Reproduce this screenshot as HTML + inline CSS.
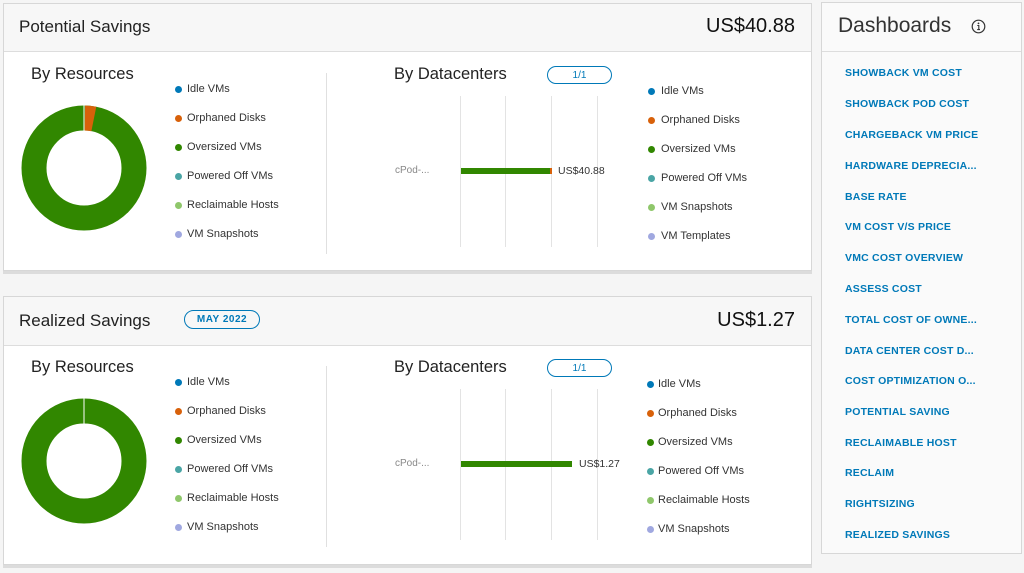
<!DOCTYPE html>
<html><head><meta charset="utf-8"><style>
*{margin:0;padding:0;box-sizing:border-box}
body{width:1024px;height:573px;background:#f5f5f5;font-family:"Liberation Sans",sans-serif;position:relative;overflow:hidden;color:#222}
.a{position:absolute;white-space:nowrap}
.card{position:absolute;left:3px;width:809px;background:#fff;border:1px solid #d7d7d7;box-shadow:0 3px 0 #dcdcdc}
.hdr{position:absolute;left:0;top:0;right:0;background:#f7f7f7;border-bottom:1px solid #ddd}
.leg{font-size:11px;color:#333}
.dot{position:absolute;width:7px;height:7px;border-radius:50%}
.pill{position:absolute;border:1px solid #0079b8;border-radius:10px;color:#0079b8;font-size:10px;display:flex;align-items:center;justify-content:center}
.side a{position:absolute;left:845px;font-size:10.5px;font-weight:bold;color:#0079b8;text-decoration:none;letter-spacing:.2px}
.grid{position:absolute;width:1px;background:#e3e3e3}
</style></head><body>

<div class="card" style="top:3px;height:268px">
 <div class="hdr" style="height:48px"></div>
</div>
<div class="a" style="left:19px;top:17px;font-size:17px;color:#222">Potential Savings</div>
<div class="a" style="right:229px;top:15px;font-size:20px;color:#111">US$40.88</div>
<div class="a" style="left:31px;top:65px;font-size:16.5px">By Resources</div>
<svg class="a" style="left:20px;top:104px" width="128" height="128" viewBox="0 0 128 128">
 <circle cx="64" cy="64" r="50" fill="none" stroke="#318700" stroke-width="25"/>
 <circle cx="64" cy="64" r="50" fill="none" stroke="#d8610a" stroke-width="25" stroke-dasharray="9 400" transform="rotate(-89 64 64)"/>
 <line x1="64" y1="1" x2="64" y2="27" stroke="#fff" stroke-width="1"/>
</svg>
<div class="a" style="left:326px;top:73px;width:1px;height:181px;background:#e0e0e0"></div>
<div class="a" style="left:394px;top:65px;font-size:16.5px">By Datacenters</div>
<div class="pill" style="left:547px;top:66px;width:65px;height:18px">1/1</div>
<div class="grid" style="left:460px;top:96px;height:151px"></div>
<div class="grid" style="left:505px;top:96px;height:151px"></div>
<div class="grid" style="left:551px;top:96px;height:151px"></div>
<div class="grid" style="left:597px;top:96px;height:151px"></div>
<div class="a" style="left:395px;top:165px;font-size:10px;color:#888">cPod-...</div>
<div class="a" style="left:461px;top:168px;width:89px;height:6px;background:#318700"></div>
<div class="a" style="left:550px;top:168px;width:2px;height:6px;background:#d8610a"></div>
<div class="a" style="left:558px;top:165px;font-size:10.5px;color:#333">US$40.88</div>

<div class="card" style="top:296px;height:269px">
 <div class="hdr" style="height:49px"></div>
</div>
<div class="a" style="left:19px;top:311px;font-size:17px">Realized Savings</div>
<div class="pill" style="left:184px;top:310px;width:76px;height:19px;font-weight:bold;letter-spacing:.5px">MAY 2022</div>
<div class="a" style="right:229px;top:309px;font-size:20px;color:#111">US$1.27</div>
<div class="a" style="left:31px;top:358px;font-size:16.5px">By Resources</div>
<svg class="a" style="left:20px;top:397px" width="128" height="128" viewBox="0 0 128 128">
 <circle cx="64" cy="64" r="50" fill="none" stroke="#318700" stroke-width="25"/>
 <line x1="64" y1="1" x2="64" y2="27" stroke="#fff" stroke-width="1"/>
</svg>
<div class="a" style="left:326px;top:366px;width:1px;height:181px;background:#e0e0e0"></div>
<div class="a" style="left:394px;top:358px;font-size:16.5px">By Datacenters</div>
<div class="pill" style="left:547px;top:359px;width:65px;height:18px">1/1</div>
<div class="grid" style="left:460px;top:389px;height:151px"></div>
<div class="grid" style="left:505px;top:389px;height:151px"></div>
<div class="grid" style="left:551px;top:389px;height:151px"></div>
<div class="grid" style="left:597px;top:389px;height:151px"></div>
<div class="a" style="left:395px;top:458px;font-size:10px;color:#888">cPod-...</div>
<div class="a" style="left:461px;top:461px;width:111px;height:6px;background:#318700"></div>
<div class="a" style="left:579px;top:458px;font-size:10.5px;color:#333">US$1.27</div>

<div class="dot" style="left:175px;top:86px;background:#0079b8"></div><div class="a leg" style="left:187px;top:83px">Idle VMs</div>
<div class="dot" style="left:175px;top:115px;background:#d8610a"></div><div class="a leg" style="left:187px;top:112px">Orphaned Disks</div>
<div class="dot" style="left:175px;top:144px;background:#318700"></div><div class="a leg" style="left:187px;top:141px">Oversized VMs</div>
<div class="dot" style="left:175px;top:173px;background:#4aa5a5"></div><div class="a leg" style="left:187px;top:170px">Powered Off VMs</div>
<div class="dot" style="left:175px;top:202px;background:#8fc76b"></div><div class="a leg" style="left:187px;top:199px">Reclaimable Hosts</div>
<div class="dot" style="left:175px;top:231px;background:#a0a8e0"></div><div class="a leg" style="left:187px;top:228px">VM Snapshots</div>

<div class="dot" style="left:648px;top:88px;background:#0079b8"></div><div class="a leg" style="left:661px;top:85px">Idle VMs</div>
<div class="dot" style="left:648px;top:117px;background:#d8610a"></div><div class="a leg" style="left:661px;top:114px">Orphaned Disks</div>
<div class="dot" style="left:648px;top:146px;background:#318700"></div><div class="a leg" style="left:661px;top:143px">Oversized VMs</div>
<div class="dot" style="left:648px;top:175px;background:#4aa5a5"></div><div class="a leg" style="left:661px;top:172px">Powered Off VMs</div>
<div class="dot" style="left:648px;top:204px;background:#8fc76b"></div><div class="a leg" style="left:661px;top:201px">VM Snapshots</div>
<div class="dot" style="left:648px;top:233px;background:#a0a8e0"></div><div class="a leg" style="left:661px;top:230px">VM Templates</div>

<div class="dot" style="left:175px;top:379px;background:#0079b8"></div><div class="a leg" style="left:187px;top:376px">Idle VMs</div>
<div class="dot" style="left:175px;top:408px;background:#d8610a"></div><div class="a leg" style="left:187px;top:405px">Orphaned Disks</div>
<div class="dot" style="left:175px;top:437px;background:#318700"></div><div class="a leg" style="left:187px;top:434px">Oversized VMs</div>
<div class="dot" style="left:175px;top:466px;background:#4aa5a5"></div><div class="a leg" style="left:187px;top:463px">Powered Off VMs</div>
<div class="dot" style="left:175px;top:495px;background:#8fc76b"></div><div class="a leg" style="left:187px;top:492px">Reclaimable Hosts</div>
<div class="dot" style="left:175px;top:524px;background:#a0a8e0"></div><div class="a leg" style="left:187px;top:521px">VM Snapshots</div>

<div class="dot" style="left:647px;top:381px;background:#0079b8"></div><div class="a leg" style="left:658px;top:378px">Idle VMs</div>
<div class="dot" style="left:647px;top:410px;background:#d8610a"></div><div class="a leg" style="left:658px;top:407px">Orphaned Disks</div>
<div class="dot" style="left:647px;top:439px;background:#318700"></div><div class="a leg" style="left:658px;top:436px">Oversized VMs</div>
<div class="dot" style="left:647px;top:468px;background:#4aa5a5"></div><div class="a leg" style="left:658px;top:465px">Powered Off VMs</div>
<div class="dot" style="left:647px;top:497px;background:#8fc76b"></div><div class="a leg" style="left:658px;top:494px">Reclaimable Hosts</div>
<div class="dot" style="left:647px;top:526px;background:#a0a8e0"></div><div class="a leg" style="left:658px;top:523px">VM Snapshots</div>

<div class="a" style="left:821px;top:2px;width:201px;height:552px;background:#fafafa;border:1px solid #d7d7d7"></div>
<div class="a" style="left:822px;top:51px;width:199px;height:1px;background:#ddd"></div>
<div class="a" style="left:838px;top:14px;font-size:21px;color:#333">Dashboards</div>
<svg class="a" style="left:971px;top:19px" width="15" height="15" viewBox="0 0 15 15"><circle cx="7.5" cy="7.5" r="6.3" fill="none" stroke="#333" stroke-width="1.2"/><circle cx="7.5" cy="4.4" r="0.9" fill="#333"/><path d="M6.3 6.5h1.5v4M6.2 10.6h2.8" stroke="#333" stroke-width="1.1" fill="none"/></svg>
<div class="side">
<a class="a" style="top:67px">SHOWBACK VM COST</a>
<a class="a" style="top:98px">SHOWBACK POD COST</a>
<a class="a" style="top:129px">CHARGEBACK VM PRICE</a>
<a class="a" style="top:160px">HARDWARE DEPRECIA...</a>
<a class="a" style="top:191px">BASE RATE</a>
<a class="a" style="top:221px">VM COST V/S PRICE</a>
<a class="a" style="top:252px">VMC COST OVERVIEW</a>
<a class="a" style="top:283px">ASSESS COST</a>
<a class="a" style="top:314px">TOTAL COST OF OWNE...</a>
<a class="a" style="top:345px">DATA CENTER COST D...</a>
<a class="a" style="top:375px">COST OPTIMIZATION O...</a>
<a class="a" style="top:406px">POTENTIAL SAVING</a>
<a class="a" style="top:437px">RECLAIMABLE HOST</a>
<a class="a" style="top:467px">RECLAIM</a>
<a class="a" style="top:498px">RIGHTSIZING</a>
<a class="a" style="top:529px">REALIZED SAVINGS</a>
</div>
</body></html>
